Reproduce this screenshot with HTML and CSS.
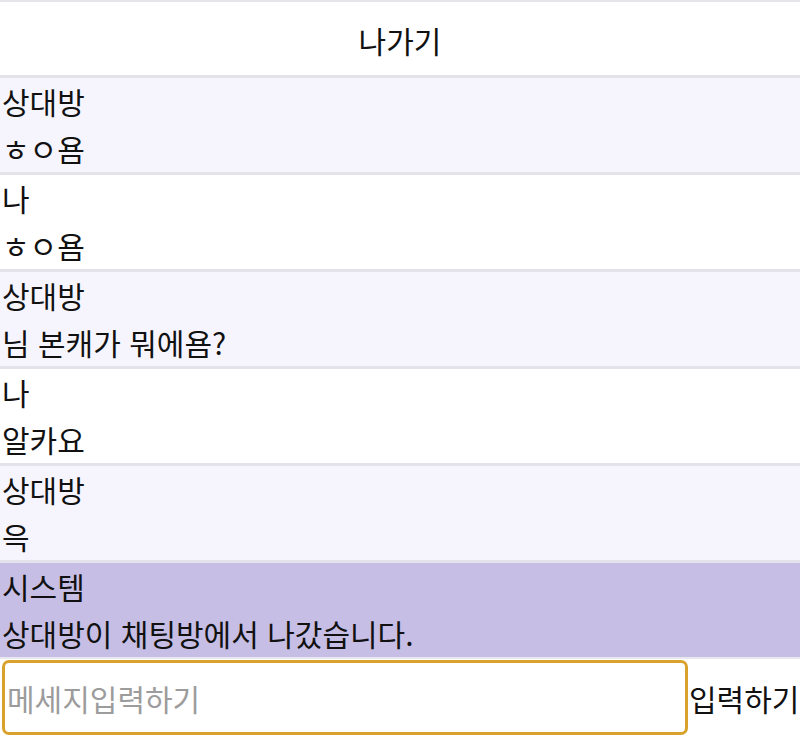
FILE: index.html
```html
<!DOCTYPE html>
<html lang="ko">
<head>
  <meta charset="UTF-8" />
  <meta name="viewport" content="width=device-width, initial-scale=1.0"/>
  <title>채팅방</title>
  <link rel="stylesheet" href="styles.css">
</head>
<body>

  <div class="chat">
    <div class="top">나가기</div>

    <div class="msg other">
      <div class="who">상대방</div>
      <div class="text">ㅎㅇ욤</div>
    </div>
    <div class="msg me">
      <div class="who">나</div>
      <div class="text">ㅎㅇ욤</div>
    </div>
    <div class="msg other">
      <div class="who">상대방</div>
      <div class="text">님 본캐가 뭐에욤?</div>
    </div>
    <div class="msg me">
      <div class="who">나</div>
      <div class="text">알카요</div>
    </div>
    <div class="msg other">
      <div class="who">상대방</div>
      <div class="text">윽</div>
    </div>
    <div class="msg system">
      <div class="who">시스템</div>
      <div class="text">상대방이 채팅방에서 나갔습니다.</div>
    </div>

    <form class="send">
      <input type="text" class="send-input" placeholder="메세지입력하기">
      <button type="button" class="send-btn">입력하기</button>
    </form>
  </div>

</body>
</html>
```

FILE: styles.css
```css
body {
  margin: 0;
  font-family: "Noto Sans CJK KR", "Noto Sans", sans-serif;
  color: #111;
  background-color: #ffffff;
}
.chat {
  width: 800px;
}
.top {
  height: 71px;
  padding-top: 2px;
  border-top: 2px solid #e6e5ea;
  display: flex;
  align-items: center;
  justify-content: center;
  font-size: 30px;
}
.msg {
  border-top: 3px solid #e4e3ea;
  height: 94px;
  padding-left: 2px;
  font-size: 30px;
  line-height: 47px;
}
.other {
  background-color: #f6f5fe;
}
.me {
  background-color: #ffffff;
}
.system {
  background-color: #c6bee4;
}
.send {
  display: flex;
  align-items: center;
  border-top: 2px solid #e8e8ee;
  margin: 0;
  padding: 1px 0 2px 2px;
}
.send-input {
  flex: 1;
  height: 75px;
  box-sizing: border-box;
  border: 3px solid #d8a22c;
  border-radius: 7px;
  padding: 0 2px;
  font-family: inherit;
  font-size: 30px;
  color: #111;
  outline: none;
}
.send-input::placeholder {
  color: #9c9c9c;
}
.send-btn {
  width: 112px;
  height: 75px;
  border: none;
  background: #ffffff;
  padding: 0 0 0 1px;
  font-family: inherit;
  font-size: 30px;
  color: #111;
  text-align: left;
  white-space: nowrap;
}
```
